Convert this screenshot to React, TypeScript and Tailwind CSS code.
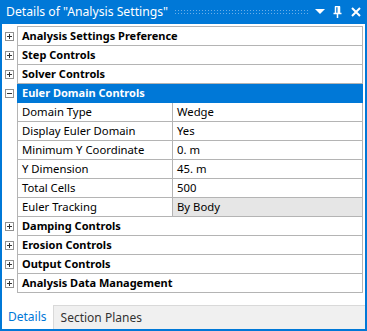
import React from "react";

const font = { fontFamily: '"Noto Sans", "Open Sans", sans-serif' };

function Box({ open }: { open?: boolean }) {
  return (
    <div className="w-[9px] h-[9px] border border-[#919191] bg-white flex items-center justify-center relative">
      <div className="absolute w-[5px] h-[1px] bg-[#333]" />
      {!open && <div className="absolute w-[1px] h-[5px] bg-[#333]" />}
    </div>
  );
}

function Group({ label, open, selected }: { label: string; open?: boolean; selected?: boolean }) {
  return (
    <div className="flex h-[19px]">
      <div className="w-[15px] flex items-center justify-center">
        <Box open={open} />
      </div>
      <div
        className={
          "flex-1 flex items-center pl-[4px] font-bold text-[11px] border-b border-l border-r " +
          (selected ? "bg-[#0078d7] text-white border-[#0078d7]" : "bg-white text-black border-[#b4b4b4]")
        }
      >
        {label}
      </div>
    </div>
  );
}

function Prop({ name, value, gray }: { name: string; value: string; gray?: boolean }) {
  return (
    <div className="flex h-[19px]">
      <div className="w-[15px]" />
      <div className="flex-1 flex border-b border-l border-r border-[#b4b4b4] text-[11.3px] text-black">
        <div className="w-[155px] flex items-center pl-[4px] border-r border-[#b4b4b4]">{name}</div>
        <div className={"flex-1 flex items-center pl-[4px] " + (gray ? "bg-[#e6e6e6]" : "bg-white")}>{value}</div>
      </div>
    </div>
  );
}

export default function App() {
  return (
    <div className="w-[367px] h-[331px] bg-[#0078d7] flex flex-col" style={font}>
      <div className="h-[24px] flex items-center text-white">
        <div className="pl-[6px] text-[12.2px] leading-none whitespace-nowrap">Details of "Analysis Settings"</div>
        <div className="flex-1 mx-[6px] h-[6px] bg-[radial-gradient(circle,#6aaee8_0.8px,transparent_1px)] bg-[length:3px_3px]" />
        <svg width="10" height="6" viewBox="0 0 10 6" className="mr-[8px]">
          <path d="M0 0 H10 L5 5 Z" fill="white" />
        </svg>
        <svg width="9" height="12" viewBox="0 0 9 12" className="mr-[9px]">
          <path d="M2 0.5 H7 M2.5 0.5 V7 M6.5 0.5 V7 M0.5 7.5 H8.5 M4.5 7.5 V12" stroke="white" strokeWidth="1.5" fill="none" />
          <rect x="4.5" y="1" width="2" height="6" fill="white" />
        </svg>
        <svg width="10" height="10" viewBox="0 0 10 10" className="mr-[6px]">
          <path d="M1 1 L9 9 M9 1 L1 9" stroke="white" strokeWidth="2" />
        </svg>
      </div>
      <div className="flex-1 mx-[2px] mb-[2px] bg-white flex flex-col">
        <div className="pt-[2px] pr-[2px]">
          <div className="flex">
            <div className="w-[15px]" />
            <div className="flex-1 border-t border-[#b4b4b4]" />
          </div>
          <Group label="Analysis Settings Preference" />
          <Group label="Step Controls" />
          <Group label="Solver Controls" />
          <Group label="Euler Domain Controls" open selected />
          <Prop name="Domain Type" value="Wedge" />
          <Prop name="Display Euler Domain" value="Yes" />
          <Prop name="Minimum Y Coordinate" value="0. m" />
          <Prop name="Y Dimension" value="45. m" />
          <Prop name="Total Cells" value="500" />
          <Prop name="Euler Tracking" value="By Body" gray />
          <Group label="Damping Controls" />
          <Group label="Erosion Controls" />
          <Group label="Output Controls" />
          <Group label="Analysis Data Management" />
        </div>
        <div className="flex-1" />
        <div className="h-[24px] flex bg-[#f0f0f0] text-[12px]">
          <div className="px-[6px] flex items-center bg-white text-[#0078d7] border-r border-[#d9d9d9]">Details</div>
          <div className="flex-1 flex items-center pl-[7px] text-[#333] border-t border-[#d9d9d9]">Section Planes</div>
        </div>
      </div>
    </div>
  );
}
